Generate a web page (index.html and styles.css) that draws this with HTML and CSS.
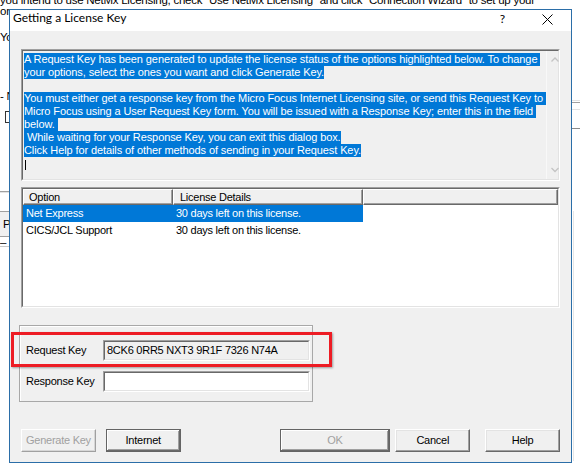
FILE: index.html
```html
<!DOCTYPE html>
<html lang="en">
<head>
<meta charset="utf-8">
<title>Getting a License Key</title>
<link rel="stylesheet" href="styles.css">
</head>
<body>
<!-- settings window lying behind the dialog -->
<div class="backdrop">
  <div class="bg-top">you intend to use NetMx Licensing, check "Use NetMx Licensing" and click "Connection Wizard" to set up your</div>
  <div class="bg-body">
    <div class="bg-left">
      <div class="bg-or">or</div>
      <div class="bg-you">You</div>
      <div class="bg-n">- N</div>
      <div class="bg-check"></div>
      <div class="bg-rule"></div>
      <div class="bg-head">P</div>
      <div class="bg-row">–</div>
    </div>
    <div class="bg-right">
      <div class="rline r1"></div>
      <div class="rline r2"></div>
      <div class="rline r3"></div>
      <div class="rline r4"></div>
      <div class="rvert"></div>
    </div>
  </div>
</div>

<div class="dialog">
  <div class="titlebar">
    <div class="title">Getting a License Key</div>
    <div class="tb-btn tb-help">?</div>
    <div class="tb-btn tb-close">
      <svg width="11" height="11" viewBox="0 0 11 11"><path d="M0.5 0.5 L10.5 10.5 M10.5 0.5 L0.5 10.5" stroke="#000" stroke-width="1" fill="none"/></svg>
    </div>
  </div>

  <div class="client">
    <div class="sunken edit">
      <div class="sunken-in edit-in">
        <div class="edit-text">
          <div class="ln"><span class="sel">A Request Key has been generated to update the license status of the options highlighted below. To change </span></div>
          <div class="ln"><span class="sel">your options, select the ones you want and click Generate Key.</span></div>
          <div class="ln"></div>
          <div class="ln"><span class="sel">You must either get a response key from the Micro Focus Internet Licensing site, or send this Request Key to </span></div>
          <div class="ln"><span class="sel">Micro Focus using a User Request Key form. You will be issued with a Response Key; enter this in the field </span></div>
          <div class="ln"><span class="sel">below. </span></div>
          <div class="ln"><span class="sel"> While waiting for your Response Key, you can exit this dialog box.</span></div>
          <div class="ln"><span class="sel">Click Help for details of other methods of sending in your Request Key.</span></div>
          <div class="ln"><span class="caret"></span></div>
        </div>
        <div class="vscroll">
          <svg class="arrow" width="16" height="17" viewBox="0 0 16 17"><path d="M4.5 10.5 L8 7 L11.5 10.5" stroke="#c4c4c4" stroke-width="1.3" fill="none"/></svg>
          <svg class="arrow" width="16" height="17" viewBox="0 0 16 17"><path d="M4.5 7 L8 10.5 L11.5 7" stroke="#c4c4c4" stroke-width="1.3" fill="none"/></svg>
        </div>
      </div>
    </div>

    <div class="sunken list">
      <div class="sunken-in list-in">
        <div class="list-head">
          <div class="hcell c1">Option</div>
          <div class="hcell c2">License Details</div>
          <div class="hcell c3"></div>
        </div>
        <div class="list-row selected">
          <div class="cell c1">Net Express</div>
          <div class="cell c2">30 days left on this license.</div>
        </div>
        <div class="list-row">
          <div class="cell c1">CICS/JCL Support</div>
          <div class="cell c2">30 days left on this license.</div>
        </div>
      </div>
    </div>

    <div class="group">
      <div class="g-row">
        <div class="g-label">Request Key</div>
        <div class="sunken field readonly"><div class="sunken-in field-in">8CK6 0RR5 NXT3 9R1F 7326 N74A</div></div>
      </div>
      <div class="g-row">
        <div class="g-label">Response Key</div>
        <div class="sunken field"><div class="sunken-in field-in"></div></div>
      </div>
      <div class="callout"></div>
    </div>

    <div class="buttons">
      <div class="btn disabled">Generate Key</div>
      <div class="btn default b-internet">Internet</div>
      <div class="btn default disabled b-ok">OK</div>
      <div class="btn b-cancel">Cancel</div>
      <div class="btn b-help">Help</div>
    </div>
  </div>
</div>
</body>
</html>
```

FILE: styles.css
```css
* { box-sizing: border-box; }

html, body { margin: 0; padding: 0; }

body {
  width: 580px;
  height: 472px;
  overflow: hidden;
  position: relative;
  background: #fff;
  color: #000;
  font-family: "Liberation Sans", Arial, sans-serif;
  font-size: 11px;
  letter-spacing: -0.25px;
}

/* ---------- window behind the dialog ---------- */
.backdrop { width: 580px; height: 472px; }

.bg-top {
  margin-top: -6px;
  height: 13px;
  line-height: 13px;
  font-size: 11.5px;
  white-space: nowrap;
}

.bg-body { display: flex; justify-content: space-between; }

.bg-left { width: 9px; overflow: hidden; font-size: 11.5px; }
.bg-left > div { line-height: 13px; height: 13px; white-space: nowrap; }
.bg-or { margin-top: -2px; }
.bg-you { margin-top: 13px; }
.bg-n { margin-top: 46px; }
.bg-left .bg-check {
  margin-top: 8px;
  margin-left: 5px;
  width: 12px;
  height: 12px;
  border: 1px solid #333;
  background: #fff;
}
.bg-left .bg-rule {
  margin-top: 68px;
  height: 2px;
  border-top: 1px solid #a0a0a0;
  border-bottom: 1px solid #e3e3e3;
}
.bg-left .bg-head {
  margin-top: 18px;
  height: 26px;
  line-height: 24px;
  padding-left: 3px;
  border-top: 1px solid #a0a0a0;
  border-bottom: 1px solid #a0a0a0;
  background: #f0f0f0;
}
.bg-left .bg-row {
  height: 10px;
  line-height: 10px;
  border-bottom: 1px solid #c8c8c8;
}

.bg-right { width: 8px; position: relative; }
.rline { height: 1px; }
.r1 { margin-top: 93px; background: #e3e3e3; }
.r2 { margin-top: 1px; background: #a0a0a0; }
.r3 { margin-top: 6px; background: #e3e3e3; }
.r4 { margin-top: 18px; background: #8a8a8a; }
.rvert { margin-top: 82px; margin-left: 1px; width: 1px; height: 250px; background: #e6e6e6; }

/* ---------- dialog ---------- */
.dialog {
  position: absolute;
  left: 9px;
  top: 9px;
  width: 563px;
  height: 454px;
  border: 1px solid #2b6ea8;
  background: #f0f0f0;
  display: flex;
  flex-direction: column;
}

.titlebar {
  height: 21px;
  flex: none;
  background: #fff;
  display: flex;
  align-items: flex-start;
  padding-right: 1px;
}

.title {
  flex: 1;
  padding-left: 3px;
  font-family: Lato, "Liberation Sans", sans-serif;
  font-size: 12px;
  line-height: 16px;
  letter-spacing: 0;
}

.tb-btn {
  width: 45px;
  height: 21px;
  display: flex;
  justify-content: center;
}

.tb-help {
  font-family: Lato, "Liberation Sans", sans-serif;
  font-size: 12px;
  line-height: 16px;
  letter-spacing: 0;
  padding-top: 1px;
}

.tb-close { padding-top: 4px; }
.tb-close svg { display: block; }

.client {
  flex: 1;
  padding: 18px 11px 0 11px;
  display: flex;
  flex-direction: column;
}

/* sunken 3D frame: outer and inner edge */
.sunken {
  border: 1px solid;
  border-color: #a0a0a0 #fff #fff #a0a0a0;
}
.sunken-in {
  height: 100%;
  border: 1px solid;
  border-color: #696969 #e3e3e3 #e3e3e3 #696969;
}

/* message edit box */
.edit { height: 132px; flex: none; }
.edit-in { display: flex; background: #f0f0f0; }

.edit-text { flex: 1; padding: 2px 0 0 1px; letter-spacing: -0.1px; }

.ln {
  height: 13px;
  line-height: 13px;
  white-space: pre;
}

.sel {
  display: inline-block;
  height: 13px;
  background: #0078d7;
  color: #fff;
}

.caret {
  display: inline-block;
  width: 1px;
  height: 10px;
  margin-top: 3px;
  margin-left: 1px;
  background: #000;
  vertical-align: top;
}

.vscroll {
  width: 16px;
  border-left: 1px solid #f8f8f8;
  display: flex;
  flex-direction: column;
  justify-content: space-between;
  padding: 0 0 1px 0;
}
.arrow { display: block; }

/* options list */
.list { height: 121px; flex: none; margin-top: 6px; }
.list-in { background: #fff; }

.list-head { display: flex; height: 16px; }

.hcell {
  height: 16px;
  background: #f0f0f0;
  border: 1px solid;
  border-color: #fff #696969 #696969 #fff;
  box-shadow: inset -1px -1px 0 #a0a0a0;
  line-height: 13px;
  padding-top: 1px;
  white-space: nowrap;
}
.hcell.c1 { width: 150px; padding-left: 5px; }
.hcell.c2 { width: 190px; padding-left: 6px; }
.hcell.c3 { flex: 1; }

.list-row {
  display: flex;
  width: 340px;
  height: 17px;
  line-height: 17px;
  white-space: nowrap;
}
.list-row.selected { background: #0078d7; color: #fff; }
.cell.c1 { width: 150px; padding-left: 3px; }
.cell.c2 { width: 190px; padding-left: 3px; }

/* key group box */
.group {
  position: relative;
  flex: none;
  margin-top: 17px;
  margin-left: -2px;
  width: 294px;
  height: 77px;
  border: 1px solid #a8a8a8;
  box-shadow: inset 1px 1px 0 #fff;
  padding-top: 14px;
  display: flex;
  flex-direction: column;
  gap: 10px;
}

.g-row { display: flex; align-items: center; }

.g-label {
  width: 83px;
  padding-left: 6px;
  line-height: 13px;
  white-space: nowrap;
}

.field { width: 207px; height: 21px; }
.field-in {
  background: #fff;
  padding-left: 2px;
  line-height: 17px;
  white-space: nowrap;
}
.readonly .field-in { background: #f0f0f0; }

/* red annotation frame around the request key */
.callout {
  position: absolute;
  left: -9px;
  top: 6px;
  width: 321px;
  height: 35px;
  border: 3px solid #ed1c24;
  box-shadow: 1px 1px 2px rgba(0, 0, 0, 0.35);
}

/* command buttons */
.buttons {
  flex: none;
  margin-top: 27px;
  display: flex;
  height: 23px;
}

.btn {
  width: 75px;
  height: 23px;
  background: #f0f0f0;
  border: 1px solid;
  border-color: #fff #696969 #696969 #fff;
  box-shadow: inset -1px -1px 0 #a0a0a0, inset 1px 1px 0 #e3e3e3;
  text-align: center;
  line-height: 21px;
  white-space: nowrap;
}

.btn.default {
  border-color: #646464;
  box-shadow: inset -1px -1px 0 #696969, inset 1px 1px 0 #fff, inset -2px -2px 0 #a0a0a0;
}

.btn.disabled { color: #a0a0a0; }
.btn.disabled:not(.default) {
  border-color: #fff #a0a0a0 #a0a0a0 #fff;
  box-shadow: inset -1px -1px 0 #d6d6d6;
}

.b-internet { margin-left: 10px; }
.b-ok { width: 111px; margin-left: 99px; }
.b-cancel { margin-left: 5px; }
.b-help { margin-left: 15px; }
```
